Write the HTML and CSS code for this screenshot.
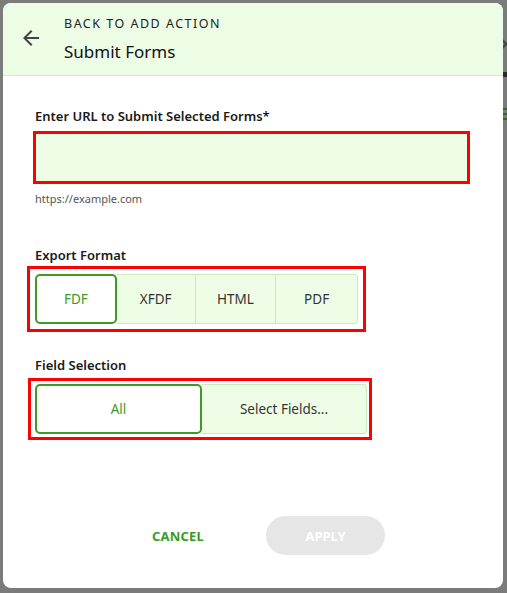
FILE: index.html
```html
<!DOCTYPE html>
<html>
<head>
<meta charset="utf-8">
<link rel="stylesheet" href="styles.css">
</head>
<body>
<div class="backdrop">
  <div class="under under-chevron"></div>
  <div class="under under-bar"></div>
  <div class="under under-lines"><span></span><span></span><span></span></div>
</div>
<div class="modal">
  <div class="header">
    <svg class="back" width="24" height="24" viewBox="0 0 24 24"><path d="M20 11H7.83l5.59-5.59L12 4l-8 8 8 8 1.41-1.41L7.83 13H20v-2z" fill="#444"/></svg>
    <div class="titles">
      <div class="eyebrow">BACK TO ADD ACTION</div>
      <div class="title">Submit Forms</div>
    </div>
  </div>
  <div class="body">
    <div class="label">Enter URL to Submit Selected Forms*</div>
    <div class="url-box"><div class="url-input"></div></div>
    <div class="hint">https://example.com</div>

    <div class="label label-export">Export Format</div>
    <div class="seg-wrap seg-export">
      <div class="seg">
        <div class="opt sel w82">FDF</div>
        <div class="opt w79">XFDF</div>
        <div class="opt w81">HTML</div>
        <div class="opt w82">PDF</div>
      </div>
    </div>

    <div class="label label-field">Field Selection</div>
    <div class="seg-wrap seg-field">
      <div class="seg">
        <div class="opt sel w167">All</div>
        <div class="opt w165">Select Fields...</div>
      </div>
    </div>

    <div class="actions">
      <div class="cancel">CANCEL</div>
      <div class="apply">APPLY</div>
    </div>
  </div>
</div>
</body>
</html>
```
FILE: styles.css
```css
* { box-sizing: border-box; }
html, body { margin: 0; padding: 0; }
body {
  width: 507px;
  height: 593px;
  background: #7b7b7b;
  font-family: "Noto Sans", "Open Sans", sans-serif;
  overflow: hidden;
  position: relative;
}
.backdrop { position: absolute; inset: 0; }
.under { position: absolute; }
.under-chevron {
  left: 498px; top: 40px; width: 8px; height: 8px;
  border-left: 2px solid #444; border-bottom: 2px solid #444;
  transform: rotate(-135deg);
}
.under-bar { left: 503px; top: 72px; width: 4px; height: 5px; background: #2a2a2a; }
.under-lines { left: 503px; top: 108px; width: 4px; display: flex; flex-direction: column; gap: 3px; }
.under-lines span { height: 2px; background: #2e6b1f; display: block; }

.modal {
  position: absolute;
  left: 3px; top: 3px;
  width: 500px; height: 585px;
  background: #fff;
  border-radius: 8px;
  overflow: hidden;
  display: flex;
  flex-direction: column;
}
.header {
  height: 73px;
  background: #edfde5;
  border-bottom: 1px solid #d4e8cc;
  display: flex;
  align-items: flex-start;
  padding-left: 16px;
}
.back { margin-top: 23px; }
.titles { margin-left: 21px; padding-top: 12px; }
.eyebrow {
  font-size: 12.5px;
  letter-spacing: 1.5px;
  color: #222;
  line-height: 18px;
}
.title {
  font-size: 17px;
  color: #111;
  line-height: 22px;
  margin-top: 8px;
}
.body {
  padding: 0 32px;
  display: flex;
  flex-direction: column;
  flex: 1;
}
.label {
  font-size: 13px;
  font-weight: 600;
  color: #1a1a1a;
  line-height: 18px;
  margin-top: 31px;
}
.url-box {
  margin-top: 6px;
  margin-left: -2px;
  width: 437px;
  height: 53px;
  border: 3px solid #ff0000;
}
.url-input { width: 100%; height: 100%; background: #eefde6; }
.hint {
  font-size: 11px;
  color: #555;
  line-height: 16px;
  margin-top: 7px;
}
.label-export { margin-top: 39px; }
.seg-wrap { border: 3px solid #ff0000; }
.seg-export {
  margin-top: 2px;
  margin-left: -8px;
  width: 339px;
  height: 66px;
  padding: 5px;
}
.label-field { margin-top: 24px; }
.seg-field {
  margin-top: 4px;
  margin-left: -7px;
  width: 344px;
  height: 62px;
  padding: 3px 2px 3px 4px;
}
.seg { display: flex; height: 100%; }
.opt {
  background: #eefde6;
  border: 1px solid #c8ecbc;
  border-left: none;
  display: flex;
  align-items: center;
  justify-content: center;
  font-size: 13.5px;
  color: #333;
}
.opt:last-child { border-radius: 0 4px 4px 0; }
.opt.sel {
  background: #fff;
  border: 2px solid #3d9a26;
  border-radius: 5px;
  color: #3d9a26;
}
.w82 { width: 82px; }
.w79 { width: 79px; }
.w81 { width: 81px; }
.w167 { width: 167px; }
.w165 { width: 165px; }
.actions {
  margin-top: auto;
  margin-bottom: 33px;
  display: flex;
  align-items: center;
  padding-left: 117px;
}
.cancel {
  font-size: 13px;
  font-weight: 700;
  color: #3d9a26;
  letter-spacing: 0.2px;
}
.apply {
  margin-left: 62px;
  width: 119px;
  height: 39px;
  border-radius: 20px;
  background: #e6e6e6;
  color: #fff;
  font-size: 13px;
  font-weight: 700;
  display: flex;
  align-items: center;
  justify-content: center;
}
```
